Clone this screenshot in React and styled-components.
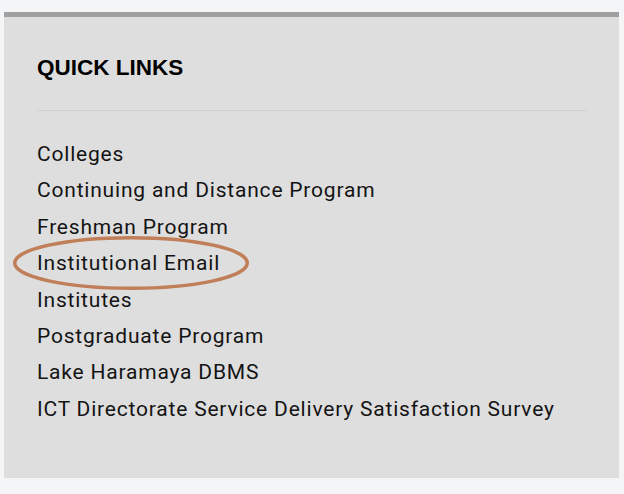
import React from 'react';
import styled, { createGlobalStyle } from 'styled-components';

const GlobalStyle = createGlobalStyle`
  html, body {
    margin: 0;
    padding: 0;
    background: #f4f5f7;
  }
`;

const Page = styled.div`
  padding: 12px 5px 16px 4px;
`;

const Card = styled.section`
  position: relative;
  background: #dedede;
  border-top: 5px solid #a0a0a0;
  padding: 38px 32px 51px 33px;
`;

const Title = styled.h2`
  margin: 0;
  font-family: "Liberation Sans", Arial, sans-serif;
  font-weight: 700;
  font-size: 22.5px;
  line-height: 26px;
  color: #000;
`;

const Divider = styled.hr`
  margin: 29px 0 25px;
  border: none;
  height: 1px;
  background: #d0d0d0;
`;

const List = styled.ul`
  list-style: none;
  margin: 0;
  padding: 0;
`;

const Item = styled.li`
  font-family: Roboto, "Noto Sans", sans-serif;
  font-size: 21px;
  letter-spacing: 0.8px;
  line-height: 36.4px;
  color: #141414;
`;

const Link = styled.a`
  color: inherit;
  text-decoration: none;
`;

const Mark = styled.svg`
  position: absolute;
  left: 7px;
  top: 217px;
  width: 240px;
  height: 58px;
  pointer-events: none;
`;

const links = [
  'Colleges',
  'Continuing and Distance Program',
  'Freshman Program',
  'Institutional Email',
  'Institutes',
  'Postgraduate Program',
  'Lake Haramaya DBMS',
  'ICT Directorate Service Delivery Satisfaction Survey',
];

export default function App() {
  return (
    <Page>
      <GlobalStyle />
      <Card>
        <Title>QUICK LINKS</Title>
        <Divider />
        <List>
          {links.map((l) => (
            <Item key={l}>
              <Link href="#">{l}</Link>
            </Item>
          ))}
        </List>
        <Mark viewBox="0 0 240 58">
          <ellipse cx="120" cy="29" rx="116.25" ry="25.25" fill="none" stroke="#c07e59" strokeWidth="3.5" />
        </Mark>
      </Card>
    </Page>
  );
}
